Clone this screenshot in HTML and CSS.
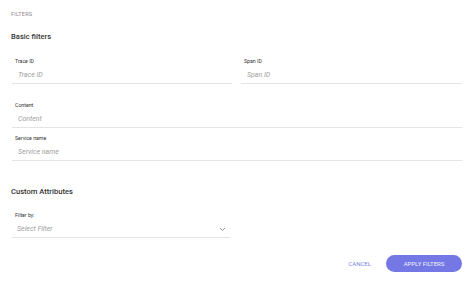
FILE: index.html
```html
<!DOCTYPE html>
<html lang="en">
<head>
      <meta charset="UTF-8">
      <meta name="viewport" content="width=device-width, initial-scale=1.0">
      <title>Filters</title>
      <link rel="stylesheet" href="styles.css">
</head>
<body>
      <div class="panel">
            <p class="panel-title">FILTERS</p>
            <h2 class="section-title">Basic filters</h2>

            <div class="row two first">
                  <div class="field">
                        <label>Trace ID</label>
                        <input type="text" placeholder="Trace ID">
                  </div>
                  <div class="field">
                        <label>Span ID</label>
                        <input type="text" placeholder="Span ID">
                  </div>
            </div>

            <div class="row second">
                  <div class="field">
                        <label>Content</label>
                        <input type="text" placeholder="Content">
                  </div>
            </div>

            <div class="row third">
                  <div class="field">
                        <label>Service name</label>
                        <input type="text" placeholder="Service name">
                  </div>
            </div>

            <h2 class="section-title custom">Custom Attributes</h2>

            <div class="row two">
                  <div class="field select">
                        <label>Filter by:</label>
                        <div class="select-box">
                              <span>Select Filter</span>
                              <svg width="7" height="5" viewBox="0 0 7 5"><path d="M1 1 L3.5 3.5 L6 1" fill="none" stroke="#777" stroke-width="0.8"/></svg>
                        </div>
                  </div>
            </div>

            <div class="actions">
                  <button class="cancel">CANCEL</button>
                  <button class="apply">APPLY FILTERS</button>
            </div>
      </div>
</body>
</html>
```

FILE: styles.css
```css
*{
      box-sizing: border-box;
}

body{
      margin: 0;
      background: #fff;
      font-family: Roboto, "Noto Sans", sans-serif;
}

.panel{
      width: 474px;
      height: 284px;
      padding: 11px 12px 0 12px;
}

.panel-title{
      margin: 0 0 0 -1px;
      font-size: 5.5px;
      line-height: 7px;
      color: #8a8a8a;
      letter-spacing: 0.2px;
}

.section-title{
      margin: 13px 0 0 -1px;
      font-size: 7.6px;
      line-height: 12px;
      font-weight: 500;
      color: #333;
}

.section-title.custom{
      margin-top: 25px;
}

.row{
      display: grid;
      grid-template-columns: 1fr;
}

.row.two{
      grid-template-columns: 220px 221px;
      column-gap: 9px;
}

.row.first{
      margin-top: 15px;
}

.row.second{
      margin-top: 18px;
}

.row.third{
      margin-top: 7px;
}

.custom + .row{
      margin-top: 14px;
}

.field{
      display: flex;
      flex-direction: column;
}

.field label{
      padding-left: 3px;
      font-size: 5.2px;
      line-height: 7px;
      color: #333;
}

.field input,
.select-box{
      margin-top: 3px;
      height: 16px;
      border: none;
      border-bottom: 1px solid #e4e4e4;
      padding: 0 0 1px 6px;
      font-family: Roboto, "Noto Sans", sans-serif;
      font-size: 7px;
      font-style: italic;
      color: #a0a0a0;
      outline: none;
      background: transparent;
}

.field input::placeholder{
      color: #a0a0a0;
}

.select-box{
      display: flex;
      align-items: center;
      justify-content: space-between;
      padding-left: 5px;
      padding-right: 4px;
      margin-right: 2px;
}

.actions{
      display: flex;
      justify-content: flex-end;
      align-items: center;
      gap: 11px;
      margin-top: 17px;
}

.actions button{
      appearance: none;
      border: none;
      font-family: Roboto, "Noto Sans", sans-serif;
      font-size: 6px;
      cursor: pointer;
}

.cancel{
      background: none;
      color: #8085e6;
      padding: 0 4px;
}

.apply{
      width: 76px;
      height: 17px;
      border-radius: 9px;
      background: #7378e4;
      color: #f2f2ff;
}
```
